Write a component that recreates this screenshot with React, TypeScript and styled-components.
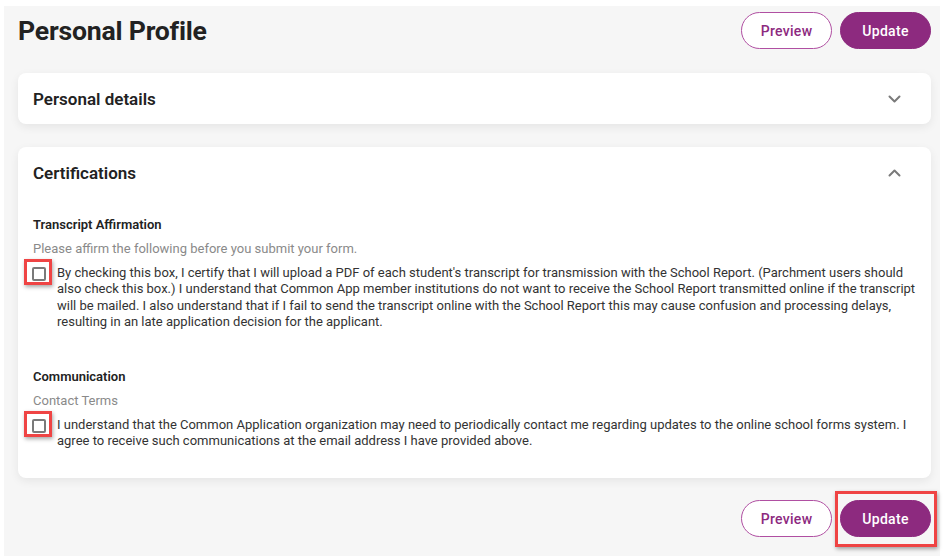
import styled, { createGlobalStyle } from "styled-components";

const GlobalStyle = createGlobalStyle`
  html, body {
    margin: 0;
    padding: 0;
    background: #ffffff;
  }
  body {
    font-family: Roboto, "Noto Sans", Arial, sans-serif;
  }
`;

const Page = styled.div`
  margin: 6px 4px 2px 4px;
  height: 550px;
  background: #f6f6f6;
  padding: 6px 9px 0 14px;
  box-sizing: border-box;
`;

const TopBar = styled.div`
  display: flex;
  align-items: center;
  justify-content: space-between;
  height: 37px;
`;

const Title = styled.h1`
  margin: 0;
  font-size: 26.6px;
  font-weight: 700;
  color: #222222;
  letter-spacing: -0.2px;
`;

const Actions = styled.div`
  display: flex;
  gap: 8px;
`;

const Button = styled.button<{ $primary?: boolean }>`
  height: 37px;
  width: 91px;
  border-radius: 19px;
  font-family: Roboto, Arial, sans-serif;
  font-size: 14px;
  font-weight: 500;
  letter-spacing: 0.3px;
  cursor: pointer;
  border: 1px solid ${(p) => (p.$primary ? "#8d2a7f" : "#b04fa2")};
  background: ${(p) => (p.$primary ? "#8d2a7f" : "#ffffff")};
  color: ${(p) => (p.$primary ? "#ffffff" : "#8d2a7f")};
`;

const Card = styled.section<{ $gap: number }>`
  margin-top: ${(p) => p.$gap}px;
  background: #ffffff;
  border-radius: 8px;
  box-shadow: 0 3px 10px rgba(0, 0, 0, 0.07);
`;

const CardHeader = styled.div`
  height: 51px;
  display: flex;
  align-items: center;
  justify-content: space-between;
  padding: 0 30px 0 15px;
`;

const CardTitle = styled.h2`
  margin: 0;
  font-size: 17px;
  font-weight: 600;
  color: #222222;
`;

const CardBody = styled.div`
  padding: 18px 15px 29px 15px;
`;

const Section = styled.div`
  & + & {
    margin-top: 37px;
  }
`;

const SectionTitle = styled.div`
  font-size: 13px;
  font-weight: 600;
  line-height: 18px;
  color: #222222;
`;

const Hint = styled.div`
  margin-top: 6px;
  font-size: 13px;
  line-height: 18px;
  color: #8a8a8a;
`;

const CheckRow = styled.label`
  display: flex;
  align-items: flex-start;
  gap: 11px;
  margin-top: 7px;
`;

const BoxWrap = styled.span`
  position: relative;
  flex: none;
  margin: 2px 0 0 -1px;
  width: 14px;
  height: 14px;
`;

const Box = styled.span`
  display: block;
  width: 14px;
  height: 14px;
  box-sizing: border-box;
  border: 2px solid #7a7a7a;
  border-radius: 2px;
  background: #ffffff;
`;

const Highlight = styled.span<{ $inset: string }>`
  position: absolute;
  inset: ${(p) => p.$inset};
  border: 3px solid #ef4444;
  box-shadow: 1px 2px 4px rgba(0, 0, 0, 0.35);
  pointer-events: none;
`;

const CheckText = styled.span`
  font-size: 13px;
  line-height: 16.4px;
  color: #333333;
`;

const Footer = styled.div`
  display: flex;
  justify-content: flex-end;
  margin-top: 22px;
`;

const HighlightWrap = styled.span`
  position: relative;
  display: inline-flex;
`;

const Chevron = ({ up }: { up?: boolean }) => (
  <svg width="13" height="8" viewBox="0 0 13 8" fill="none">
    <path
      d={up ? "M1.5 6.5 L6.5 1.5 L11.5 6.5" : "M1.5 1.5 L6.5 6.5 L11.5 1.5"}
      stroke="#7a7a7a"
      strokeWidth="2"
      strokeLinecap="round"
      strokeLinejoin="round"
    />
  </svg>
);

export default function App() {
  return (
    <>
      <GlobalStyle />
      <Page>
        <TopBar>
          <Title>Personal Profile</Title>
          <Actions>
            <Button>Preview</Button>
            <Button $primary>Update</Button>
          </Actions>
        </TopBar>

        <Card $gap={24}>
          <CardHeader>
            <CardTitle>Personal details</CardTitle>
            <Chevron />
          </CardHeader>
        </Card>

        <Card $gap={23}>
          <CardHeader>
            <CardTitle>Certifications</CardTitle>
            <Chevron up />
          </CardHeader>
          <CardBody>
            <Section>
              <SectionTitle>Transcript Affirmation</SectionTitle>
              <Hint>Please affirm the following before you submit your form.</Hint>
              <CheckRow>
                <BoxWrap>
                  <Box />
                  <Highlight $inset="-8px -6px -4px -8px" />
                </BoxWrap>
                <CheckText>
                  By checking this box, I certify that I will upload a PDF of each student's
                  transcript for transmission with the School Report. (Parchment users should
                  also check this box.) I understand that Common App member institutions do not
                  want to receive the School Report transmitted online if the transcript will be
                  mailed. I also understand that if I fail to send the transcript online with the
                  School Report this may cause confusion and processing delays, resulting in an
                  late application decision for the applicant.
                </CheckText>
              </CheckRow>
            </Section>
            <Section>
              <SectionTitle>Communication</SectionTitle>
              <Hint>Contact Terms</Hint>
              <CheckRow>
                <BoxWrap>
                  <Box />
                  <Highlight $inset="-8px -6px -4px -8px" />
                </BoxWrap>
                <CheckText>
                  I understand that the Common Application organization may need to periodically
                  contact me regarding updates to the online school forms system. I agree to
                  receive such communications at the email address I have provided above.
                </CheckText>
              </CheckRow>
            </Section>
          </CardBody>
        </Card>

        <Footer>
          <Actions>
            <Button>Preview</Button>
            <HighlightWrap>
              <Button $primary>Update</Button>
              <Highlight $inset="-9px -6px -10px -5px" />
            </HighlightWrap>
          </Actions>
        </Footer>
      </Page>
    </>
  );
}
